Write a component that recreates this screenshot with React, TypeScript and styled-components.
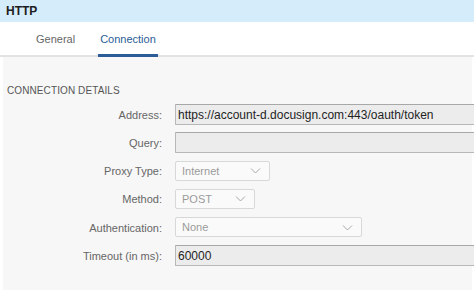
import React from "react";
import styled, { createGlobalStyle } from "styled-components";

const Global = createGlobalStyle`
  html, body { margin: 0; padding: 0; background: #ffffff; }
  body { font-family: "Liberation Sans", Arial, sans-serif; }
`;

const Page = styled.div`
  width: 474px;
  height: 296px;
  display: flex;
  flex-direction: column;
  overflow: hidden;
`;

const TitleBar = styled.div`
  height: 22px;
  background: #d5ecfb;
  display: flex;
  align-items: center;
  padding-left: 6px;
  font-weight: bold;
  font-size: 12px;
  color: #1d1d1d;
`;

const TabBar = styled.div`
  height: 33px;
  background: #ffffff;
  display: flex;
  align-items: stretch;
  padding-left: 34px;
  gap: 21px;
  border-bottom: 2px solid #e2e2e2;
`;

const Tab = styled.div<{ $active?: boolean }>`
  display: flex;
  align-items: center;
  padding: 2px 2px 0;
  font-size: 11px;
  color: ${(p) => (p.$active ? "#2c5d96" : "#666666")};
  border-bottom: 3px solid ${(p) => (p.$active ? "#2b5c97" : "transparent")};
  margin-bottom: -2px;
`;

const Content = styled.div`
  margin: 0 2px 0 3px;
  height: 233px;
  background: #f7f7f7;
  padding: 28px 0 0 4px;
  box-sizing: border-box;
`;

const SectionTitle = styled.div`
  font-size: 10px;
  color: #555555;
  letter-spacing: 0.1px;
  margin-bottom: 8px;
`;

const Form = styled.div`
  display: grid;
  grid-template-columns: 155px 1fr;
  grid-auto-rows: 28.3px;
  column-gap: 13px;
  align-items: start;
`;

const Label = styled.div`
  height: 21px;
  display: flex;
  align-items: center;
  justify-content: flex-end;
  font-size: 11px;
  color: #666666;
`;

const TextInput = styled.div`
  height: 21px;
  box-sizing: border-box;
  margin-right: -6px;
  background: #ececec;
  border: 1px solid #b8b8b8;
  border-top-color: #a8a8a8;
  border-radius: 1px;
  display: flex;
  align-items: center;
  padding-left: 2px;
  font-size: 12px;
  color: #1f1f1f;
`;

const Select = styled.div<{ $w: number }>`
  width: ${(p) => p.$w}px;
  height: 20px;
  box-sizing: border-box;
  background: #fafafa;
  border: 1px solid #d8d8d8;
  border-radius: 2px;
  display: flex;
  align-items: center;
  justify-content: space-between;
  padding: 0 8px 0 6px;
  font-size: 11px;
  color: #9a9a9a;
`;

const Chevron = () => (
  <svg width="11" height="7" viewBox="0 0 11 7">
    <path d="M1 1.5l4.5 4.5 4.5-4.5" fill="none" stroke="#a8a8a8" strokeWidth="1" />
  </svg>
);

export default function App() {
  return (
    <Page>
      <Global />
      <TitleBar>HTTP</TitleBar>
      <TabBar>
        <Tab>General</Tab>
        <Tab $active>Connection</Tab>
      </TabBar>
      <Content>
        <SectionTitle>CONNECTION DETAILS</SectionTitle>
        <Form>
          <Label>Address:</Label>
          <TextInput>https://account-d.docusign.com:443/oauth/token</TextInput>
          <Label>Query:</Label>
          <TextInput />
          <Label>Proxy Type:</Label>
          <Select $w={95}>
            Internet
            <Chevron />
          </Select>
          <Label>Method:</Label>
          <Select $w={80}>
            POST
            <Chevron />
          </Select>
          <Label>Authentication:</Label>
          <Select $w={187}>
            None
            <Chevron />
          </Select>
          <Label>Timeout (in ms):</Label>
          <TextInput>60000</TextInput>
        </Form>
      </Content>
    </Page>
  );
}
